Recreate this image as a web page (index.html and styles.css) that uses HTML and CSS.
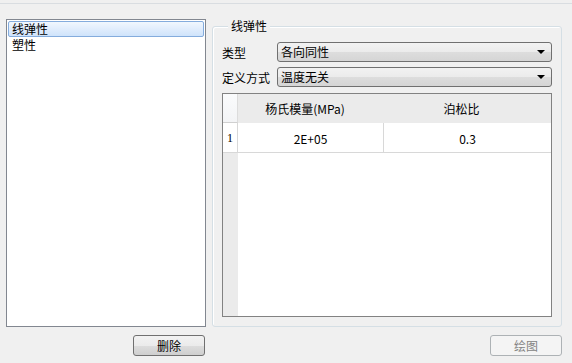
FILE: index.html
```html
<!DOCTYPE html>
<html lang="zh-CN">
  <head>
    <meta charset="UTF-8" />
    <title>材料属性</title>
    <link rel="stylesheet" href="styles.css">
  </head>
  <body>
    <div class="pane">
      <ul class="list">
        <li class="item selected">线弹性</li>
        <li class="item">塑性</li>
      </ul>

      <div class="group">
        <div class="group-title">线弹性</div>
        <div class="fields">
          <div class="field">
            <span class="label">类型</span>
            <div class="combo">各向同性<span class="arrow"></span></div>
          </div>
          <div class="field">
            <span class="label">定义方式</span>
            <div class="combo">温度无关<span class="arrow"></span></div>
          </div>
        </div>

        <!-- property table -->
        <div class="table">
          <div class="thead">
            <div class="corner"></div>
            <div class="th">杨氏模量(MPa)</div>
            <div class="th">泊松比</div>
          </div>
          <div class="row">
            <div class="row-head">1</div>
            <div class="cell">2E+05</div>
            <div class="cell">0.3</div>
          </div>
          <div class="filler">
            <div class="filler-head"></div>
            <div></div>
          </div>
        </div>
      </div>

      <div class="btn-row btn-row-left">
        <button class="btn">删除</button>
      </div>
      <div class="btn-row">
        <button class="btn" disabled>绘图</button>
      </div>
    </div>
  </body>
</html>
```

FILE: styles.css
```css
body {
  margin: 0;
  height: 100vh;
  background-color: #f0f0f0;
  font-family: "Noto Sans CJK SC", sans-serif;
  font-size: 12px;
  color: #000;
  overflow: hidden;
}
.pane {
  margin-top: 3px;
  width: 562px;
  height: 359px;
  padding: 15px 8px 0 6px;
  border-top: 1px solid #d9dde1;
  border-right: 1px solid #d9dde1;
  box-shadow: inset -1px 0 #fff;
  display: grid;
  grid-template-columns: 200px 350px;
  grid-template-rows: 308px 21px;
  column-gap: 6px;
  row-gap: 8px;
}
/* list on the left */
.list {
  margin: 0;
  padding: 1px;
  list-style: none;
  background: #fff;
  border: 1px solid #828790;
  box-sizing: border-box;
}
.item {
  height: 14px;
  line-height: 14px;
  padding-left: 3px;
  border: 1px solid transparent;
}
.item.selected {
  border-color: #84acdd;
  border-radius: 2px;
  background: linear-gradient(#f1f7fe, #cfe3fb);
}
/* group box */
.group {
  margin-top: 7px;
  height: 301px;
  padding: 0 9px 9px 9px;
  border: 1px solid #d5dfe5;
  border-radius: 3px;
  box-shadow: inset 1px 1px #fff;
  box-sizing: border-box;
}
.group-title {
  width: fit-content;
  margin: -8px 0 0 6px;
  padding: 0 3px;
  line-height: 14px;
  background: #f0f0f0;
}
.fields {
  margin-top: 9px;
  display: flex;
  flex-direction: column;
  gap: 5px;
}
.field {
  display: flex;
  align-items: center;
  height: 20px;
}
.label {
  width: 55px;
}
.combo {
  flex: 1;
  height: 20px;
  line-height: 18px;
  padding-left: 3px;
  border: 1px solid #707070;
  border-radius: 3px;
  background: linear-gradient(#f2f2f2 0%, #ebebeb 50%, #dddddd 51%, #d5d5d5 100%);
  box-sizing: border-box;
  display: flex;
  justify-content: space-between;
  align-items: center;
}
.arrow {
  width: 0;
  height: 0;
  margin-right: 6px;
  border-left: 4px solid transparent;
  border-right: 4px solid transparent;
  border-top: 4px solid #000;
}
/* table */
.table {
  margin-top: 6px;
  height: 224px;
  border: 1px solid #828282;
  background: #fff;
  box-sizing: border-box;
  display: flex;
  flex-direction: column;
}
.thead,
.row {
  display: grid;
  grid-template-columns: 15px 146px 1fr;
}
.thead {
  height: 29px;
  background: #ebebeb;
}
.corner {
  background: linear-gradient(#fafbfc, #f3f4f6);
  border-right: 1px solid #dcdcdc;
  border-bottom: 1px solid #d0d0d0;
}
.th,
.cell {
  display: flex;
  align-items: center;
  justify-content: center;
}
.th {
  padding-right: 12px;
}
.row {
  height: 30px;
  border-bottom: 1px solid #d8d8d8;
  box-sizing: border-box;
}
.row-head {
  padding-left: 4px;
  line-height: 30px;
  font-family: "Liberation Serif", serif;
  border-right: 1px solid #d8d8d8;
}
.cell {
  border-right: 1px solid #d8d8d8;
}
.cell:last-child {
  border-right: none;
}
.filler {
  flex: 1;
  display: grid;
  grid-template-columns: 15px 1fr;
}
.filler-head {
  background: #ebebeb;
}
/* buttons */
.btn-row {
  display: flex;
  justify-content: flex-end;
}
.btn-row-left {
  padding-right: 1px;
}
.btn {
  width: 72px;
  height: 21px;
  padding: 0;
  font-family: inherit;
  font-size: 12px;
  color: #000;
  border: 1px solid #707070;
  border-radius: 3px;
  background: linear-gradient(#f2f2f2 0%, #ebebeb 50%, #dddddd 51%, #cfcfcf 100%);
}
.btn:disabled {
  color: #838383;
  border-color: #adb2b5;
  background: #f4f4f4;
}
```
